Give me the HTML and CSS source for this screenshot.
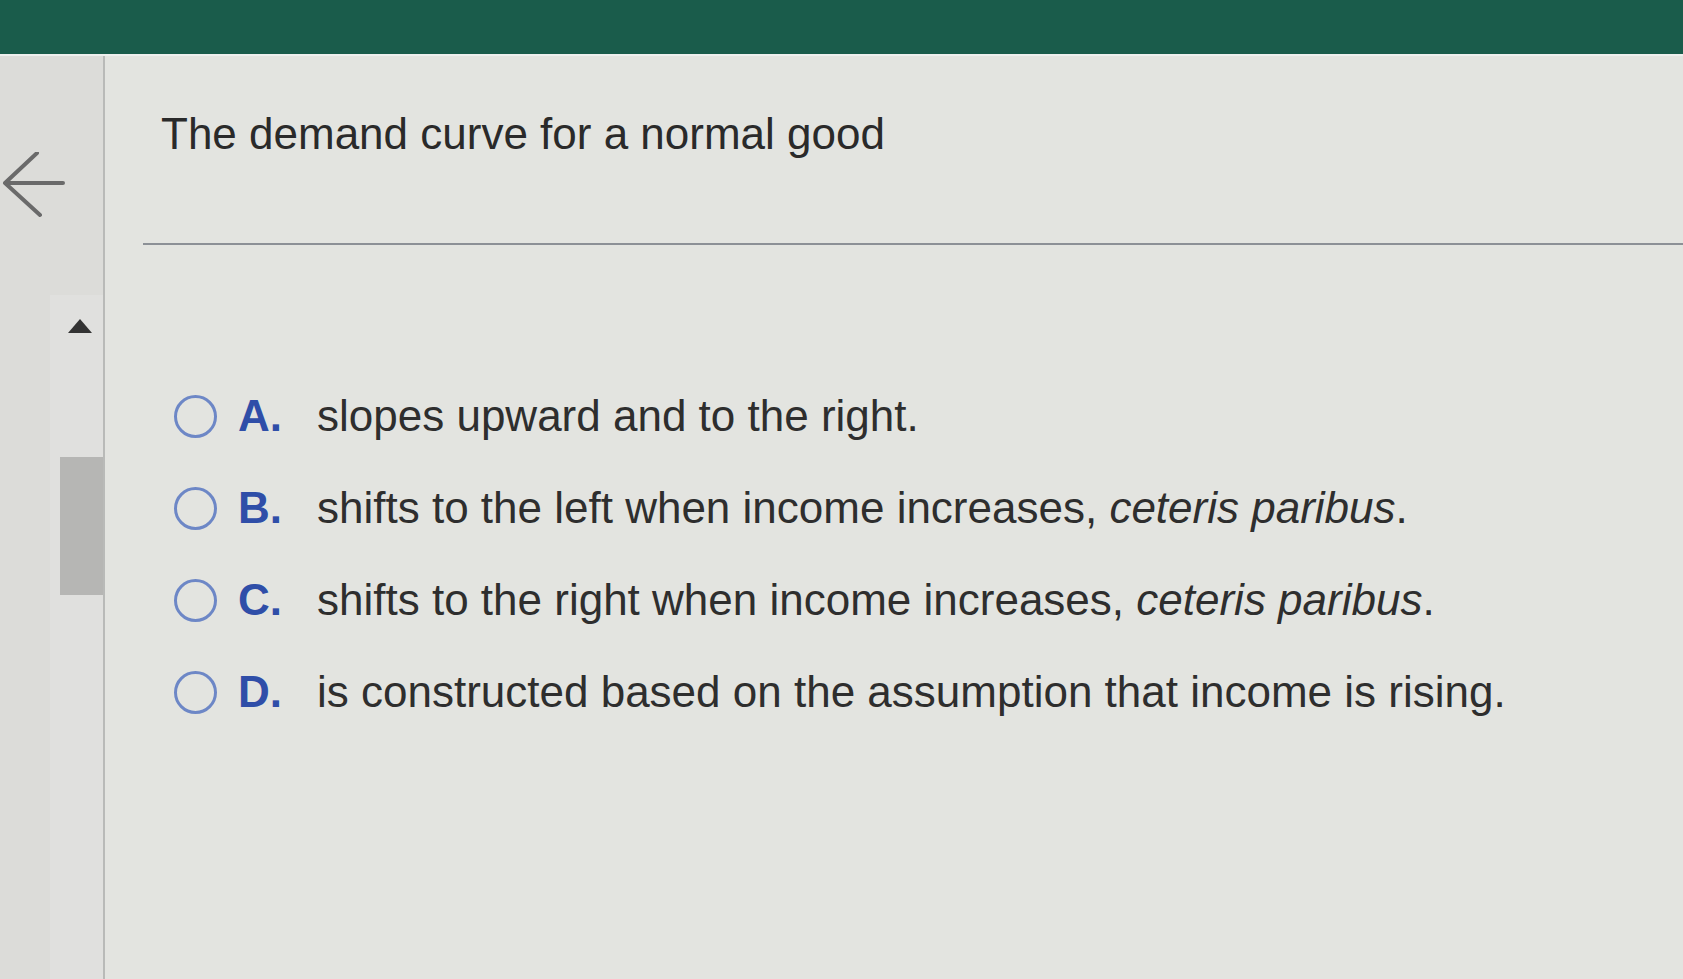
FILE: index.html
```html
<!DOCTYPE html>
<html lang="en">
<head>
<meta charset="utf-8">
<title>The demand curve for a normal good</title>
<link rel="stylesheet" href="styles.css">
</head>
<body>
<header class="topbar"></header>
<div class="layout">
  <aside class="sidebar">
    <svg class="back-arrow" width="66" height="66" viewBox="0 0 66 66" aria-hidden="true">
      <path d="M63 31 H5 M5 31 L37 1 M5 31 L40 63" fill="none" stroke="#6a6a6a" stroke-width="4" stroke-linecap="round" stroke-linejoin="round"/>
    </svg>
    <div class="track">
      <div class="track-up"></div>
      <div class="thumb"></div>
    </div>
  </aside>
  <main class="content">
    <h1 class="question">The demand curve for a normal good</h1>
    <div class="divider"></div>
    <ul class="options">
      <li class="option"><span class="radio"></span><span class="letter">A.</span><span class="text">slopes upward and to the right.</span></li>
      <li class="option"><span class="radio"></span><span class="letter">B.</span><span class="text">shifts to the left when income increases, <em>ceteris paribus</em>.</span></li>
      <li class="option"><span class="radio"></span><span class="letter">C.</span><span class="text">shifts to the right when income increases, <em>ceteris paribus</em>.</span></li>
      <li class="option"><span class="radio"></span><span class="letter">D.</span><span class="text">is constructed based on the assumption that income is rising.</span></li>
    </ul>
  </main>
</div>
</body>
</html>
```
FILE: styles.css
```css
html, body {
  margin: 0;
  padding: 0;
  height: 100%;
}
body {
  font-family: "Liberation Sans", Arial, sans-serif;
  background: #e3e4e0;
  color: #2e2e2e;
  display: flex;
  flex-direction: column;
  overflow: hidden;
}
.topbar {
  height: 54px;
  background: #1a5c4b;
  border-bottom: 2px solid #eef0ee;
  flex: none;
}
.layout {
  flex: 1;
  display: flex;
  min-height: 0;
}
.sidebar {
  width: 103px;
  flex: none;
  background: #dcdcd9;
  border-right: 2px solid #b9bab8;
  display: flex;
  flex-direction: column;
}
.back-arrow {
  display: block;
  margin-top: 96px;
  margin-left: 0;
}
.track {
  flex: 1;
  margin-top: 77px;
  margin-left: 50px;
  background: #e0e0de;
  display: flex;
  flex-direction: column;
}
.track-up {
  width: 0;
  height: 0;
  margin-top: 24px;
  margin-left: 18px;
  border-left: 12px solid transparent;
  border-right: 12px solid transparent;
  border-bottom: 14px solid #333333;
}
.thumb {
  margin-top: 124px;
  margin-left: 10px;
  height: 138px;
  background: #b6b6b4;
}
.content {
  flex: 1;
  padding-top: 52px;
}
.question {
  margin: 0 0 0 56px;
  font-size: 44px;
  line-height: 52px;
  font-weight: normal;
  color: #2a2a2a;
}
.divider {
  margin: 83px 0 0 38px;
  height: 2px;
  background: #8c9096;
}
.options {
  list-style: none;
  margin: 146px 0 0 69px;
  padding: 0;
  display: flex;
  flex-direction: column;
  gap: 42px;
}
.option {
  display: flex;
  align-items: center;
  font-size: 44px;
  line-height: 50px;
}
.radio {
  width: 37px;
  height: 37px;
  border: 3.5px solid #6d87c6;
  border-radius: 50%;
  flex: none;
  margin-right: 21px;
}
.letter {
  width: 79px;
  flex: none;
  font-weight: bold;
  color: #2f4ea8;
}
.text {
  white-space: nowrap;
}
.text em {
  font-style: italic;
}
```
